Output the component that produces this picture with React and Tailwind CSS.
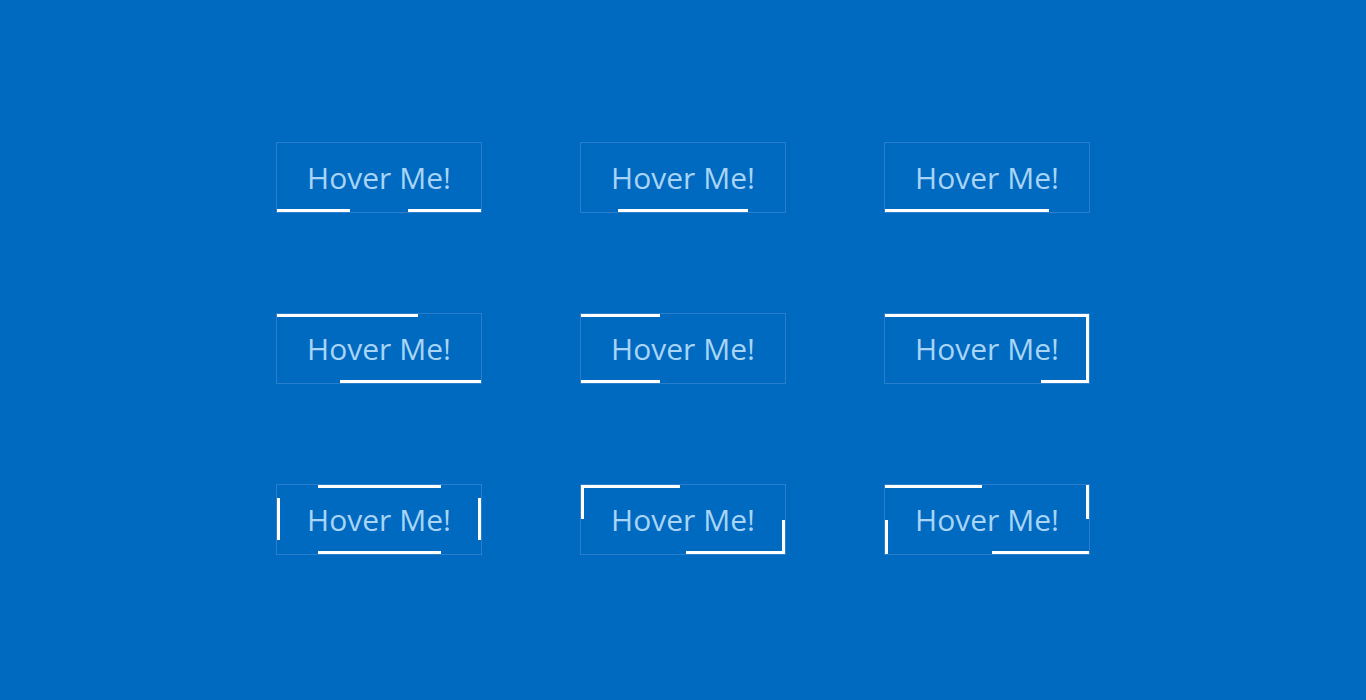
// Grid of outlined buttons, each with a different set of white accent bars
const bar = "absolute bg-white";

const buttons = [
  // split bottom
  [
    `${bar} bottom-0 left-0 h-[3px] w-[73px]`,
    `${bar} bottom-0 right-0 h-[3px] w-[73px]`,
  ],
  // centered bottom
  [`${bar} bottom-0 left-[37px] h-[3px] w-[130px]`],
  // bottom from left
  [`${bar} bottom-0 left-0 h-[3px] w-[164px]`],
  // top-left + bottom-right
  [
    `${bar} top-0 left-0 h-[3px] w-[141px]`,
    `${bar} bottom-0 right-0 h-[3px] w-[141px]`,
  ],
  // top + bottom from left
  [
    `${bar} top-0 left-0 h-[3px] w-[79px]`,
    `${bar} bottom-0 left-0 h-[3px] w-[79px]`,
  ],
  // top, right and a bit of bottom
  [
    `${bar} top-0 left-0 h-[3px] w-full`,
    `${bar} top-0 right-0 h-full w-[3px]`,
    `${bar} bottom-0 right-0 h-[3px] w-[48px]`,
  ],
  // all four sides centered
  [
    `${bar} top-0 left-[41px] h-[3px] w-[123px]`,
    `${bar} bottom-0 left-[41px] h-[3px] w-[123px]`,
    `${bar} left-0 top-[13px] h-[42px] w-[3px]`,
    `${bar} right-0 top-[13px] h-[42px] w-[3px]`,
  ],
  // corner brackets
  [
    `${bar} top-0 left-0 h-[3px] w-[99px]`,
    `${bar} top-0 left-0 h-[34px] w-[3px]`,
    `${bar} bottom-0 right-0 h-[3px] w-[99px]`,
    `${bar} bottom-0 right-0 h-[34px] w-[3px]`,
  ],
  // rotated halves
  [
    `${bar} top-0 left-0 h-[3px] w-[97px]`,
    `${bar} top-0 right-0 h-[34px] w-[3px]`,
    `${bar} bottom-0 left-0 h-[34px] w-[3px]`,
    `${bar} bottom-0 right-0 h-[3px] w-[97px]`,
  ],
];

function HoverButton({ bars }) {
  return (
    <button
      type="button"
      className="relative flex h-[71px] w-[206px] items-center justify-center border border-[#2a7ecc] text-[30px] text-[#a8d4f5]"
      style={{ fontFamily: '"Open Sans", sans-serif' }}
    >
      {bars.map((cls, i) => (
        <span key={i} className={cls} />
      ))}
      <span className="relative">Hover Me!</span>
    </button>
  );
}

export default function App() {
  return (
    <main className="flex h-[700px] w-full items-center justify-center bg-[#0069c0] pb-[3px]">
      <div className="grid grid-cols-3 gap-x-[98px] gap-y-[100px]">
        {buttons.map((bars, i) => (
          <HoverButton key={i} bars={bars} />
        ))}
      </div>
    </main>
  );
}
